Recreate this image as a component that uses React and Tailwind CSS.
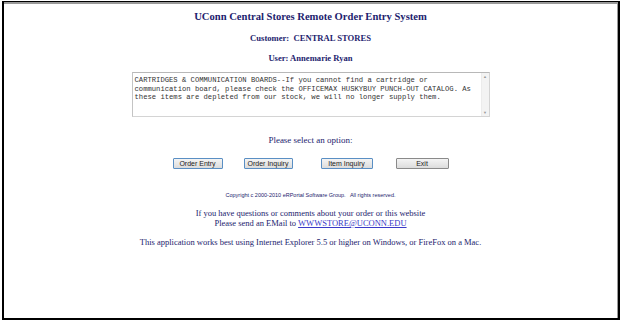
import React from "react";

const Btn = ({ children, blue = true, className = "" }) => (
  <button
    className={
      "h-[11px] text-[7px] leading-[9px] text-[#222] font-['Liberation_Sans',Arial,sans-serif] bg-gradient-to-b from-[#f4f4f4] to-[#dcdcdc] border rounded-[1px] " +
      (blue ? "border-[#5a8fc4] " : "border-[#8a8a8a] ") +
      className
    }
  >
    {children}
  </button>
);

export default function App() {
  return (
    <div className="w-[622px] h-[321px] bg-white pt-px pl-[2px]">
      <div className="w-[618px] h-[319px] border-l-2 border-t border-r-2 border-b-2 border-black">
        <div className="h-full border-t-2 border-r border-[#9a9a9a] flex flex-col items-center font-['Liberation_Serif','Times_New_Roman',serif] text-[#1d1d6e]">
          <h1 className="mt-[6px] text-[10.6px] font-bold leading-[14px]">
            UConn Central Stores Remote Order Entry System
          </h1>
          <div className="mt-[8px] text-[8.6px] font-bold leading-[12px] whitespace-pre">
            Customer:  CENTRAL STORES
          </div>
          <div className="mt-[8px] text-[8.6px] font-bold leading-[12px]">
            User: Annemarie Ryan
          </div>

          {/* notice box */}
          <div className="mt-[8px] w-[358px] h-[45px] flex border border-[#d4d4d4] border-t-[#b8b8b8] border-l-[#c4c4c4]">
            <div className="flex-1 pl-[2px] pt-[3px] font-['Liberation_Mono','Courier_New',monospace] text-[7.2px] leading-[8.5px] text-[#333]">
              CARTRIDGES &amp; COMMUNICATION BOARDS--If you cannot find a cartridge or
              <br />
              communication board, please check the OFFICEMAX HUSKYBUY PUNCH-OUT CATALOG. As
              <br />
              these items are depleted from our stock, we will no longer supply them.
            </div>
            <div className="w-[8px] bg-[#f3f3f3] border-l border-[#ececec] flex flex-col items-center justify-between py-[1px] text-[4px] leading-[5px] text-[#999]">
              <span>▲</span>
              <span>▼</span>
            </div>
          </div>

          <div className="mt-[17px] text-[9px] leading-[12px]">Please select an option:</div>

          <div className="mt-[12px] flex">
            <Btn className="w-[50px]">Order Entry</Btn>
            <Btn className="w-[49px] ml-[21px]">Order Inquiry</Btn>
            <Btn className="w-[52px] ml-[28px]">Item Inquiry</Btn>
            <Btn blue={false} className="w-[53px] ml-[23px]">Exit</Btn>
          </div>

          <div className="mt-[22px] text-[5.5px] leading-[8px] text-[#1d1d6e] font-['Liberation_Sans',Arial,sans-serif] whitespace-pre">
            Copyright c 2000-2010 eRPortal Software Group.   All rights reserved.
          </div>

          <div className="mt-[9px] text-[8.5px] leading-[10px] text-center">
            If you have questions or comments about your order or this website
            <br />
            Please send an EMail to{" "}
            <a href="#" className="text-[#3a3ac8] underline">
              WWWSTORE@UCONN.EDU
            </a>
          </div>

          <div className="mt-[9px] text-[8.5px] leading-[10px]">
            This application works best using Internet Explorer 5.5 or higher on Windows, or FireFox on a Mac.
          </div>
        </div>
      </div>
    </div>
  );
}
